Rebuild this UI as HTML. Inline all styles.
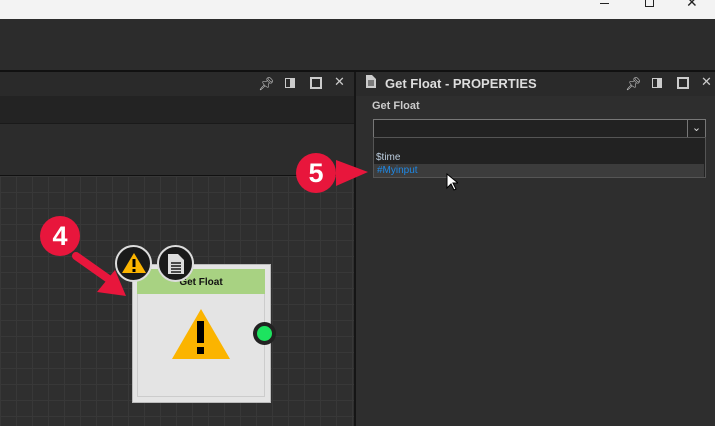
<!DOCTYPE html>
<html><head><style>
*{margin:0;padding:0;box-sizing:border-box}
body{width:715px;height:426px;overflow:hidden;background:#2b2b2b;font-family:"Liberation Sans",sans-serif;position:relative}
.a{position:absolute}
.grid{background-color:#2f2f2f;background-image:linear-gradient(#383838 1px,transparent 1px),linear-gradient(90deg,#383838 1px,transparent 1px);background-size:16px 16px}
.ic{color:#ccc;font-size:13px}
</style></head><body>
<div class="a" style="left:0;top:0;width:715px;height:19px;background:#f3f3f3"></div>
<div class="a" style="left:600px;top:3px;width:9px;height:1px;background:#222"></div>
<div class="a" style="left:645px;top:-2px;width:9px;height:9px;border:1px solid #222"></div>
<div class="a" style="left:686px;top:-6px;font-size:14px;color:#222">✕</div>
<div class="a" style="left:0;top:19px;width:715px;height:51px;background:#2c2c2c"></div>
<div class="a" style="left:0;top:70px;width:715px;height:2px;background:#111"></div>
<div class="a" style="left:0;top:72px;width:354px;height:24px;background:#2a2a2a"></div>
<div class="a" style="left:0;top:96px;width:354px;height:27px;background:#232323"></div>
<div class="a" style="left:0;top:123px;width:354px;height:52px;background:#2c2c2c;border-top:1px solid #1a1a1a"></div>
<div class="a grid" style="left:0;top:175px;width:354px;height:251px;border-top:1px solid #111"></div>
<div class="a" style="left:354px;top:72px;width:2px;height:354px;background:#151515"></div>
<div class="a" style="left:356px;top:72px;width:359px;height:24px;background:#2a2a2a"></div>
<div class="a" style="left:356px;top:96px;width:359px;height:330px;background:#2e2e2e"></div>
<svg class="a" style="left:366px;top:75px" width="10" height="13"><path d="M0 0h6l4 4v9H0z" fill="#ccc"/><path d="M2 6h6M2 8h6M2 10h6" stroke="#2a2a2a"/></svg>
<div class="a" style="left:385px;top:76px;color:#ddd;font-weight:bold;font-size:13px">Get Float - PROPERTIES</div>
<div class="a" style="left:372px;top:100px;color:#ccc;font-weight:bold;font-size:11px">Get Float</div>
<div class="a" style="left:373px;top:119px;width:333px;height:19px;background:#222;border:1px solid #777"></div>
<div class="a" style="left:687px;top:120px;width:18px;height:17px;border-left:1px solid #777;color:#ddd;font-size:11px;text-align:center;line-height:17px">⌄</div>
<div class="a" style="left:373px;top:137px;width:333px;height:41px;background:#222;border:1px solid #555"></div>
<div class="a" style="left:376px;top:152px;color:#bcd;font-size:10px">$time</div>
<div class="a" style="left:374px;top:164px;width:330px;height:13px;background:#3c3c3c"></div>
<div class="a" style="left:377px;top:165px;color:#1e88e5;font-size:10px">#Myinput</div>
<svg class="a" style="left:446px;top:173px" width="12" height="18"><path d="M1 1v14l4-4 3 6 2-1-3-6h5z" fill="#fff" stroke="#000"/></svg>
<div class="a ic" style="left:258px;top:76px">📌︎</div>
<div class="a" style="left:285px;top:78px;width:10px;height:10px;border:1px solid #ccc;background:linear-gradient(90deg,#2a2a2a 50%,#ccc 50%)"></div>
<div class="a" style="left:310px;top:77px;width:12px;height:12px;border:2px solid #ccc"></div>
<div class="a ic" style="left:334px;top:74px">✕</div>
<div class="a ic" style="left:625px;top:76px">📌︎</div>
<div class="a" style="left:652px;top:78px;width:10px;height:10px;border:1px solid #ccc;background:linear-gradient(90deg,#2a2a2a 50%,#ccc 50%)"></div>
<div class="a" style="left:677px;top:77px;width:12px;height:12px;border:2px solid #ccc"></div>
<div class="a ic" style="left:701px;top:74px">✕</div>
<div class="a" style="left:132px;top:264px;width:139px;height:139px;background:#e4e4e4;border:1px solid #bbb"></div>
<div class="a" style="left:137px;top:269px;width:128px;height:25px;background:#a8d282;font-size:10px;font-weight:bold;text-align:center;line-height:27px;color:#111">Get Float</div>
<div class="a" style="left:137px;top:294px;width:128px;height:103px;border:1px solid #ccc;border-top:none"></div>
<svg class="a" style="left:170px;top:307px" width="62" height="54"><polygon points="31,2 60,52 2,52" fill="#fbb400"/><rect x="27" y="14" width="7" height="22" fill="#000"/><rect x="27" y="40" width="7" height="7" fill="#000"/></svg>
<div class="a" style="left:253px;top:322px;width:23px;height:23px;border-radius:50%;background:#222"></div>
<div class="a" style="left:257px;top:326px;width:15px;height:15px;border-radius:50%;background:#1de35f"></div>
<div class="a" style="left:115px;top:245px;width:37px;height:37px;border-radius:50%;background:#1a1a1a;border:2px solid #ddd"></div>
<svg class="a" style="left:121px;top:251px" width="26" height="24"><polygon points="13,2 25,22 1,22" fill="#fbb400"/><rect x="11.5" y="8" width="3" height="8" fill="#000"/><rect x="11.5" y="18" width="3" height="3" fill="#000"/></svg>
<div class="a" style="left:157px;top:245px;width:37px;height:37px;border-radius:50%;background:#1a1a1a;border:2px solid #ddd"></div>
<svg class="a" style="left:167px;top:253px" width="18" height="22"><path d="M1 1h10l6 6v14H1z" fill="#ddd"/><path d="M4 10h10M4 13h10M4 16h10M4 19h10" stroke="#1a1a1a" stroke-width="1.5"/></svg>
<div class="a" style="left:40px;top:216px;width:40px;height:40px;border-radius:50%;background:#e8163c;color:#fff;font-size:27px;font-weight:bold;text-align:center;line-height:40px">4</div>
<svg class="a" style="left:70px;top:250px" width="65" height="50"><line x1="6" y1="6" x2="40" y2="30" stroke="#e8163c" stroke-width="8" stroke-linecap="round"/><polygon points="56,46 27,42 45,20" fill="#e8163c"/></svg>
<div class="a" style="left:296px;top:153px;width:40px;height:40px;border-radius:50%;background:#e8163c;color:#fff;font-size:27px;font-weight:bold;text-align:center;line-height:40px">5</div>
<svg class="a" style="left:332px;top:158px" width="40" height="30"><polygon points="4,2 36,14 4,28" fill="#e8163c"/></svg>
</body></html>
